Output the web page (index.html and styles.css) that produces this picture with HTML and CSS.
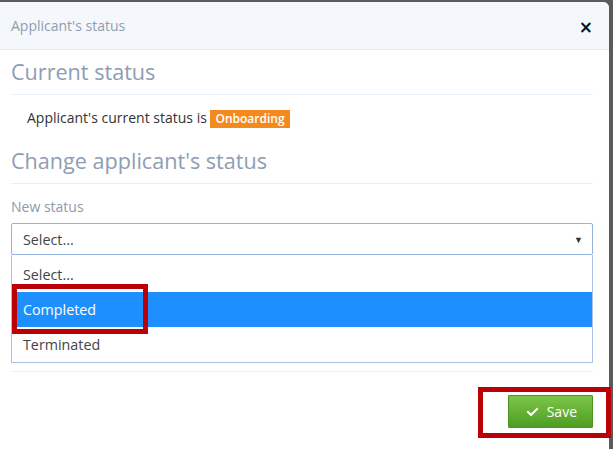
FILE: index.html
```html
<!DOCTYPE html>
<html lang="en">

<head>
    <meta charset="UTF-8">
    <meta name="viewport" content="width=device-width, initial-scale=1.0">
    <title>Applicant's status</title>

    <link rel="stylesheet" href="styles.css">
</head>

<body>
    <div class="modal">
        <div class="modal-header">
            <span class="modal-title">Applicant's status</span>
            <button class="close">&times;</button>
        </div>

        <div class="modal-body">
            <h3>Current status</h3>
            <p class="current">Applicant's current status is <span class="badge">Onboarding</span></p>

            <h3>Change applicant's status</h3>
            <label class="field-label">New status</label>
            <div class="select">
                <div class="select-value">
                    <span>Select...</span>
                    <span class="caret">&#9660;</span>
                </div>
                <ul class="options">
                    <li>Select...</li>
                    <li class="active">Completed</li>
                    <li>Terminated</li>
                </ul>
            </div>
        </div>

        <div class="modal-footer">
            <button class="btn-save">
                <svg viewBox="0 0 24 24" width="13" height="13" fill="currentColor">
                    <path d="M20.3 4.6l-11 11-5.6-5.6L1 12.7l8.3 8.3L23 7.3z"></path>
                </svg>
                Save
            </button>
        </div>

        <!-- red callouts drawn over the screenshot -->
        <div class="callout callout-option"></div>
        <div class="callout callout-save"></div>
    </div>
</body>

</html>
```

FILE: styles.css
```css
body {
    margin: 0;
    height: 449px;
    overflow: hidden;
    background: #5b5b5b;
    font-family: 'Open Sans', 'Noto Sans', sans-serif;
    font-size: 14px;
    color: #333;
}

.modal {
    position: relative;
    width: 609px;
    height: 447px;
    margin-top: 2px;
    background: #fff;
    border-top-right-radius: 6px;
}

.modal-header {
    display: flex;
    justify-content: space-between;
    align-items: center;
    height: 47px;
    padding: 0 16px 0 11px;
    background: #f4f8fc;
    border-bottom: 1px solid #e2eaf3;
    border-top-right-radius: 6px;
}

.modal-title {
    color: #909db0;
    font-size: 14px;
}

.close {
    border: none;
    background: none;
    padding: 0;
    margin-top: 3px;
    font-family: 'DejaVu Sans', sans-serif;
    font-size: 17px;
    font-weight: bold;
    color: #111;
    cursor: pointer;
}

.modal-body {
    padding: 0 16px 0 11px;
}

.modal-body h3 {
    margin: 8px 0 0;
    padding-bottom: 8px;
    line-height: 28px;
    font-size: 21.6px;
    font-weight: 400;
    color: #8e9db2;
    border-bottom: 1px solid #e6eef7;
}

.modal-body h3 + .field-label {
    margin-top: 14px;
}

.current {
    margin: 13px 0 19px 16px;
    line-height: 20px;
}

.badge {
    display: inline-block;
    padding: 0 5px;
    line-height: 18px;
    background: #f48a1e;
    color: #fff;
    font-size: 12px;
    font-weight: 600;
}

.field-label {
    display: block;
    line-height: 18px;
    color: #8d9bad;
}

.select {
    margin-top: 7px;
    font-size: 14.3px;
    color: #444;
}

.select-value {
    display: flex;
    justify-content: space-between;
    align-items: center;
    height: 30px;
    padding: 0 9px 0 11px;
    border: 1px solid #93b2e0;
    border-radius: 2px;
}

.caret {
    font-size: 9px;
    color: #333;
}

.options {
    list-style: none;
    margin: 0;
    padding: 2px 0 0;
    border: 1px solid #a9c0e4;
    border-top: none;
}

.options li {
    height: 35px;
    line-height: 35px;
    padding-left: 11px;
}

.options li.active {
    background: #1e8ffe;
    color: #fff;
}

.modal-footer {
    display: flex;
    justify-content: flex-end;
    margin: 8px 16px 0 11px;
    padding-top: 23px;
    border-top: 1px solid #edf2f7;
}

.btn-save {
    display: flex;
    align-items: center;
    gap: 8px;
    height: 33px;
    padding: 0 15px 0 17px;
    border: 1px solid #4a9421;
    border-radius: 1px;
    background: linear-gradient(to bottom, #7cc548, #4e9e22);
    color: #fff;
    font-family: inherit;
    font-size: 14px;
    cursor: pointer;
}

.callout {
    position: absolute;
    border: 5px solid #bb0008;
    box-sizing: border-box;
}

.callout-option {
    left: 12px;
    top: 282px;
    width: 136px;
    height: 50px;
}

.callout-save {
    left: 478px;
    top: 385px;
    width: 133px;
    height: 51px;
}
```
